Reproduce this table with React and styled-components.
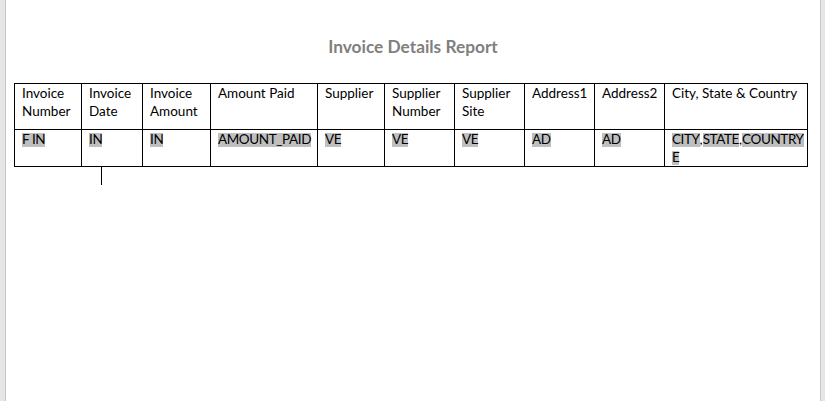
import React from "react";
import styled, { createGlobalStyle } from "styled-components";

const GlobalStyle = createGlobalStyle`
  html, body {
    margin: 0;
    padding: 0;
    background: #e6e6e6;
    overflow: hidden;
  }
`

const Page = styled.div`
  box-sizing: border-box;
  margin: 0 4px 0 5px;
  height: 401px;
  background: #ffffff;
  border-left: 1px solid #c6c6c6;
  border-right: 1px solid #c6c6c6;
  padding: 37px 0 0 8px;
  font-family: Lato, "Open Sans", sans-serif;
  color: #000;
`

const Title = styled.h1`
  margin: 0 0 26px -8px;
  font-size: 17.3px;
  line-height: 20px;
  font-weight: bold;
  color: #7f7f7f;
  text-align: center;
`

const Table = styled.table`
  border-collapse: collapse;
  table-layout: fixed;
  width: 793px;
  font-size: 13.5px;
  line-height: 18px;
`

const Cell = styled.td`
  border: 1px solid #000;
  padding: 0 4px 0 7px;
  vertical-align: top;
  white-space: nowrap;
  height: ${(props) => props.h}px;
  overflow: hidden;
`

const Mark = styled.span`
  letter-spacing: -0.4px;
  background: linear-gradient(
    transparent 2px,
    #bfbfbf 2px,
    #bfbfbf 16px,
    transparent 16px
  );
`

const Cursor = styled.div`
  width: 1px;
  height: 18px;
  margin-left: 87px;
  background: #000;
`

const widths = [67, 61, 68, 107, 67, 70, 70, 70, 70, 143]

const headers = [
  ["Invoice", "Number"],
  ["Invoice", "Date"],
  ["Invoice", "Amount"],
  ["Amount Paid"],
  ["Supplier"],
  ["Supplier", "Number"],
  ["Supplier", "Site"],
  ["Address1"],
  ["Address2"],
  ["City, State & Country"],
]

const values = ["F IN", "IN", "IN", "AMOUNT_PAID", "VE", "VE", "VE", "AD", "AD"]

export default function App() {
  return (
    <>
      <GlobalStyle />
      <Page>
        <Title>Invoice Details Report</Title>
        <Table>
          <colgroup>
            {widths.map((w, i) => (
              <col key={i} style={{ width: w }} />
            ))}
          </colgroup>
          <tbody>
            <tr>
              {headers.map((lines, i) => (
                <Cell key={i} h={45}>
                  {lines.map((l, j) => (
                    <div key={j}>{l}</div>
                  ))}
                </Cell>
              ))}
            </tr>
            <tr>
              {values.map((v, i) => (
                <Cell key={i} h={35}>
                  <Mark>{v}</Mark>
                </Cell>
              ))}
              <Cell h={35}>
                <div>
                  <Mark>CITY</Mark>,<Mark>STATE</Mark>,<Mark>COUNTRY</Mark>
                </div>
                <div>
                  <Mark>E</Mark>
                </div>
              </Cell>
            </tr>
          </tbody>
        </Table>
        <Cursor />
      </Page>
    </>
  )
}
